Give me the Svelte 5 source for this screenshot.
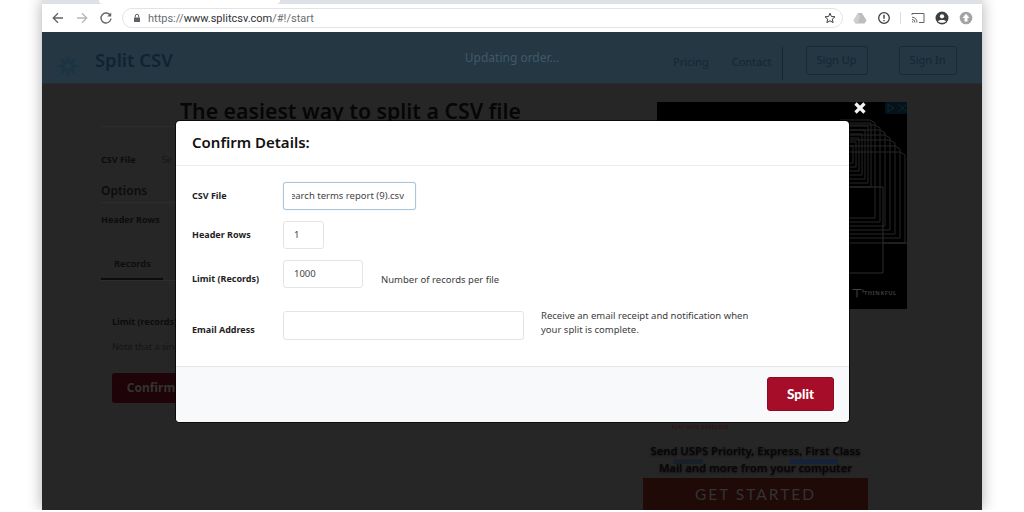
<script>
  const outer = [
    [875, 123, 218], [880, 128, 222], [885, 133, 226], [890, 138, 230], [895, 143, 234], [900, 149, 238], [905, 155, 243]
  ];
  const inner = [
    [853, 146, 163], [856, 142, 167], [859, 138, 171], [862, 134, 175], [865, 130, 179], [868, 126, 183], [871, 123, 187]
  ];
</script>

<div class="window">
  <div class="tabstrip"><span class="tabgap"></span></div>
  <div class="toolbar">
    <div class="navs">
      <svg viewBox="0 0 14 14" width="14" height="14"><path d="M12 7H2.5M7 2.2 2.2 7 7 11.8" fill="none" stroke="#5f6368" stroke-width="1.3"/></svg>
      <svg viewBox="0 0 14 14" width="14" height="14"><path d="M2 7h9.5M7 2.2 11.8 7 7 11.8" fill="none" stroke="#b4b7ba" stroke-width="1.3"/></svg>
      <svg viewBox="0 0 14 14" width="14" height="14"><path d="M11.3 4.4A5 5 0 1 0 12 7.5" fill="none" stroke="#5f6368" stroke-width="1.3"/><path d="M12.2 1.6v4h-4z" fill="#5f6368"/></svg>
    </div>
    <div class="omnibox">
      <svg viewBox="0 0 10 10" width="10" height="10"><path d="M2 4.5h6v4.5H2z" fill="#5f6368"/><path d="M3.3 4.5V3a1.7 1.7 0 0 1 3.4 0v1.5" fill="none" stroke="#5f6368" stroke-width="1"/></svg>
      <span class="url"><span class="dim">https://</span>www.splitcsv.com<span class="dim">/#!/start</span></span>
      <svg class="star" viewBox="0 0 12 12" width="12" height="12"><path d="M6 1.2 7.4 4.5 11 4.8 8.3 7.1 9.1 10.6 6 8.8 2.9 10.6 3.7 7.1 1 4.8 4.6 4.5z" fill="none" stroke="#3c4043" stroke-width="1"/></svg>
    </div>
    <div class="exts">
      <svg viewBox="0 0 14 12" width="14" height="12"><path d="M5 1h4l4.5 7.500-2 3H2.500l-2-3z" fill="#bdbdbd"/><path d="M5 1 7 4.500 4.500 11.500h-2l-2-3z" fill="#cfcfcf"/></svg>
      <svg viewBox="0 0 14 14" width="14" height="14"><circle cx="7" cy="7" r="5.300" fill="none" stroke="#3c4043" stroke-width="1.300"/><path d="M7 3.800v4M7 9v1.300" stroke="#3c4043" stroke-width="1.400"/></svg>
      <span class="sep"></span>
      <svg viewBox="0 0 14 12" width="14" height="12"><path d="M1 3V1.500h12v9H8M1 5.200A5.500 5.500 0 0 1 6 10.500M1 7.500a3 3 0 0 1 3 3M1 9.500a1 1 0 0 1 1 1" fill="none" stroke="#5f6368" stroke-width="1"/></svg>
      <svg viewBox="0 0 14 14" width="14" height="14"><circle cx="7" cy="7" r="6.500" fill="#3c4043"/><circle cx="7" cy="5.300" r="2.100" fill="#fff"/><path d="M2.900 10.300C4 8.500 10 8.500 11.100 10.300 9 12.300 5 12.300 2.900 10.300z" fill="#fff"/></svg>
      <svg viewBox="0 0 14 14" width="14" height="14"><circle cx="7" cy="7" r="6.300" fill="#a3a3a3"/><path d="M7 2.800 10.500 7H8.500v3.500h-3V7H3.500z" fill="#fff"/></svg>
    </div>
  </div>

  <header class="site">
    <div class="brand">
      <svg class="logo" viewBox="0 0 24 24" width="24" height="24"><g fill="#1b3443"><path d="M12 0.500 14 7 12 9.500 10 7z"/><path d="M12 0.500 14 7 12 9.500 10 7z" transform="rotate(45 12 12)"/><path d="M12 0.500 14 7 12 9.500 10 7z" transform="rotate(90 12 12)"/><path d="M12 0.500 14 7 12 9.500 10 7z" transform="rotate(135 12 12)"/><path d="M12 0.500 14 7 12 9.500 10 7z" transform="rotate(180 12 12)"/><path d="M12 0.500 14 7 12 9.500 10 7z" transform="rotate(225 12 12)"/><path d="M12 0.500 14 7 12 9.500 10 7z" transform="rotate(270 12 12)"/><path d="M12 0.500 14 7 12 9.500 10 7z" transform="rotate(315 12 12)"/></g></svg>
      <span class="brandname">Split CSV</span>
    </div>
    <span class="status">Updating order...</span>
    <nav class="links">
      <span>Pricing</span>
      <span>Contact</span>
    </nav>
    <span class="vline"></span>
    <span class="ghost up">Sign Up</span>
    <span class="ghost in">Sign In</span>
  </header>

  <main class="page">
    <div class="left">
      <h1>The easiest way to split a CSV file</h1>
      <div class="rule"></div>
      <div class="row file"><b>CSV File</b><span>Se</span></div>
      <h2>Options</h2>
      <div class="row headers"><b>Header Rows</b></div>
      <div class="tabs"><span class="tab">Records</span></div>
      <div class="panel">
        <b>Limit (records)</b>
        <p>Note that a single</p>
        <span class="confirm">Confirm</span>
      </div>
    </div>
    <aside class="right">
      <div class="ad">
        <svg class="lines" viewBox="657 102 250 208" width="250" height="208">
          {#each outer as [x, y, b]}
            <path d="M840 {y - 3}H{x - 5}L{x} {y}V{b}H840" fill="none" stroke="#262626"/>
          {/each}
          {#each inner as [x, y, b]}
            <path d="M840 {y}H{x}V{b}H840" fill="none" stroke="#262626"/>
          {/each}
          <path d="M800 187H883V273H800M883 243H907" fill="none" stroke="#2c2c2c"/>
          <path d="M852.500 289.500h9M857 289.500v8M863 289.500v3" fill="none" stroke="#444"/>
        </svg>
        <span class="thinkful">THINKFUL</span>
        <span class="adchoice">
          <svg viewBox="0 0 22 12" width="22" height="12"><rect width="22" height="12" fill="#05121a"/><path d="M3 2.500v7l6-3.500zM14 2.500l7 7M21 2.500l-7 7" fill="none" stroke="#0f2733"/></svg>
        </span>
      </div>
      <div class="promo">
        <span class="envelope">FLAT RATE ENVELOPE</span>
        <div class="copy">
          <span class="smudge a"></span>
          <span class="smudge b"></span>
          <p>Send USPS Priority, Express, First Class Mail and more from your computer</p>
        </div>
        <span class="getstarted">GET STARTED</span>
      </div>
    </aside>
  </main>
</div>

<svg class="close" viewBox="0 0 12 12" width="12" height="12"><path d="M1.500 1.500 10.500 10.500M10.500 1.500 1.500 10.500" stroke="#f2f2f2" stroke-width="3.200"/></svg>

<section class="modal">
  <div class="m-head">Confirm Details:</div>
  <div class="m-body">
    <div class="f one">
      <label for="csv">CSV File</label>
      <div id="csv" class="input focus"><div class="clip"><span>Search terms report (9).csv</span></div></div>
    </div>
    <div class="f two">
      <label for="hr">Header Rows</label>
      <input id="hr" class="input w40" value="1" readonly />
    </div>
    <div class="f three">
      <label for="lim">Limit (Records)</label>
      <input id="lim" class="input w80" value="1000" readonly />
      <span class="hint">Number of records per file</span>
    </div>
    <div class="f four">
      <label for="em">Email Address</label>
      <input id="em" class="input w240" readonly />
      <span class="hint wide">Receive an email receipt and notification when your split is complete.</span>
    </div>
  </div>
  <div class="m-foot"><button class="split">Split</button></div>
</section>

<style>
  :global(body) {
    margin: 0;
    background: #fff;
    overflow: hidden;
  }
  .window {
    width: 940px;
    height: 510px;
    margin-left: 42px;
    display: flex;
    flex-direction: column;
    overflow: hidden;
    box-shadow: 0 0 14px rgba(0, 0, 0, 0.32);
    font-family: "Noto Sans", sans-serif;
    background: #262626;
  }
  .tabstrip {
    height: 4px;
    background: #dee1e6;
    padding-left: 57px;
    flex: none;
  }
  .tabgap {
    display: block;
    width: 181px;
    height: 4px;
    background: #fff;
    border-radius: 0 0 6px 6px;
  }
  .toolbar {
    height: 28px;
    flex: none;
    background: #fff;
    display: flex;
    align-items: center;
    box-sizing: border-box;
    padding-left: 9px;
  }
  .navs {
    display: flex;
    gap: 10px;
    width: 71px;
    flex: none;
    align-items: center;
  }
  .omnibox {
    width: 721px;
    height: 20px;
    box-sizing: border-box;
    border: 1px solid #e2e3e5;
    border-radius: 10px;
    display: flex;
    align-items: center;
    padding-left: 9px;
    gap: 6px;
    flex: none;
  }
  .url {
    font: 11px Roboto, sans-serif;
    color: #303134;
  }
  .dim { color: #6a6d71; }
  .star { margin-left: auto; margin-right: 6px; }
  .exts {
    display: flex;
    align-items: center;
    margin-left: 10px;
    gap: 10px;
  }
  .sep {
    width: 1px;
    height: 12px;
    background: #dadce0;
    margin: 0 0 0 -1px;
  }
  .site {
    height: 51px;
    flex: none;
    background: #243743;
    display: flex;
    align-items: center;
    position: relative;
    color: #162836;
  }
  .brand {
    display: flex;
    align-items: center;
    margin-left: 14px;
    gap: 15px;
    width: 417px;
    flex: none;
  }
  .logo { position: relative; top: 8px; }
  .brandname {
    font-size: 18.400px;
    font-weight: 600;
    color: #0f2433;
    position: relative;
    top: 2px;
  }
  .status {
    width: 140px;
    flex: none;
    text-align: center;
    font-size: 12px;
    color: #40596a;
    margin-right: 25px;
    margin-left: -31px;
    margin-top: -1px;
  }
  .links {
    display: flex;
    gap: 23px;
    font-size: 11px;
    color: #142635;
    margin-left: 66px;
    margin-top: 8px;
  }
  .vline {
    width: 1px;
    height: 33px;
    background: #15262f;
    margin-left: 10px;
    margin-top: 12px;
  }
  .ghost {
    box-sizing: border-box;
    height: 29px;
    border: 1px solid #172a38;
    border-radius: 3px;
    font-size: 11px;
    color: #142635;
    display: flex;
    align-items: center;
    justify-content: center;
    padding-bottom: 3px;
    margin-top: 6px;
  }
  .up { width: 62px; margin-left: 23px; }
  .in { width: 58px; margin-left: 31px; }
  .page {
    flex: 1;
    display: flex;
    min-height: 0;
    background: #262626;
    border-top: 1px solid #2c2c2c;
  }
  .left {
    width: 615px;
    flex: none;
    box-sizing: border-box;
    padding-left: 59px;
    color: #0a0a0a;
  }
  h1 {
    margin: 14px 0 0 79px;
    font-size: 21.250px;
    line-height: 26px;
    font-weight: 600;
    color: #060606;
    white-space: nowrap;
  }
  .rule {
    height: 1px;
    background: #2d2d2d;
    width: 400px;
    margin-top: 2px;
  }
  .row {
    display: flex;
    font-size: 9px;
    color: #0c0c0c;
  }
  .row b { font-weight: 700; }
  .row span { margin-left: 26px; color: #161616; }
  .file { margin-top: 26px; line-height: 14px; }
  h2 {
    margin: 16px 0 0;
    font-size: 12px;
    line-height: 16px;
    font-weight: 600;
    color: #0c0c0c;
    padding-bottom: 3px;
    border-bottom: 1px solid #2d2d2d;
    width: 400px;
  }
  .headers { margin-top: 10px; line-height: 14px; }
  .tabs {
    margin-top: 30px;
    border-bottom: 1px solid #2d2d2d;
    width: 400px;
    height: 23px;
  }
  .tab {
    display: block;
    width: 62px;
    box-sizing: border-box;
    height: 23px;
    border-bottom: 2px solid #0c0c0c;
    padding-left: 13px;
    font-size: 9.500px;
    font-weight: 600;
    line-height: 14px;
    color: #0c0c0c;
  }
  .panel {
    padding: 34px 0 0 11px;
    font-size: 9px;
    line-height: 14px;
    color: #0c0c0c;
  }
  .panel b { display: block; }
  .panel p { margin: 11px 0 0; color: #141414; }
  .confirm {
    display: flex;
    align-items: center;
    justify-content: center;
    width: 78px;
    height: 30px;
    margin-top: 19px;
    background: #1e0308;
    border-radius: 3px;
    font-size: 12px;
    font-weight: 700;
    color: #333;
  }
  .right {
    flex: 1;
    display: flex;
    flex-direction: column;
    min-width: 0;
  }
  .ad {
    width: 250px;
    height: 208px;
    background: #000;
    margin-top: 18px;
    position: relative;
    overflow: hidden;
  }
  .lines { display: block; }
  .thinkful {
    position: absolute;
    left: 207px;
    top: 187px;
    font-size: 5.500px;
    font-weight: 700;
    letter-spacing: 0.6px;
    color: #3c3c3c;
  }
  .adchoice {
    position: absolute;
    right: 0;
    top: 0;
    height: 12px;
    line-height: 0;
  }
  .promo {
    width: 225px;
    margin: 115px 0 0 -14px;
    text-align: center;
    color: #070707;
  }
  .envelope {
    display: block;
    font-family: "Liberation Sans", sans-serif;
    font-size: 4.500px;
    font-weight: 700;
    letter-spacing: 0.4px;
    line-height: 8px;
    color: #33101a;
    text-align: left;
    padding-left: 29px;
  }
  .copy { position: relative; }
  .smudge {
    position: absolute;
    top: 27px;
    height: 5px;
  }
  .smudge.a { left: 30px; width: 30px; background: #1a2028; }
  .smudge.b { left: 147px; width: 48px; background: #14233a; }
  .promo p {
    position: relative;
    margin: 0;
    padding-top: 10px;
    font-size: 11.250px;
    line-height: 17px;
    font-weight: 600;
    text-shadow: 0 1px 2px rgba(0, 0, 0, 0.6);
  }
  .getstarted {
    display: block;
    height: 32px;
    margin-top: 2px;
    background: #1f0a08;
    font-family: Lato, sans-serif;
    font-size: 15.500px;
    line-height: 32px;
    letter-spacing: 2px;
    color: #333;
  }
  .close {
    position: absolute;
    left: 854px;
    top: 102px;
  }
  .modal {
    position: absolute;
    left: 176px;
    top: 121px;
    width: 673px;
    height: 301px;
    background: #fff;
    border-radius: 4px;
    overflow: hidden;
    display: flex;
    flex-direction: column;
    font-family: "Noto Sans", sans-serif;
    color: #1c1c1c;
    box-shadow: 0 0 0 1px rgba(0, 0, 0, 0.7);
  }
  .m-head {
    height: 45px;
    flex: none;
    box-sizing: border-box;
    border-bottom: 1px solid #ececec;
    padding-left: 16px;
    font-size: 15px;
    font-weight: 600;
    line-height: 42px;
    color: #111;
  }
  .m-body {
    flex: 1;
    display: flex;
    flex-direction: column;
    padding: 16px 0 0 16px;
  }
  .f {
    display: flex;
    align-items: center;
  }
  .two { margin-top: 11px; }
  .three { margin-top: 11px; }
  .four { margin-top: 23px; }
  label {
    width: 91px;
    flex: none;
    font-size: 9px;
    font-weight: 700;
    color: #1e1e1e;
    position: relative;
  }
  .one label, .two label { top: -1px; }
  .three label, .four label { top: 4px; }
  .input {
    box-sizing: border-box;
    height: 29px;
    border: 1px solid #e2e4e6;
    border-radius: 3px;
    background: #fff;
    font: 9.500px "Noto Sans", sans-serif;
    color: #444;
    padding: 0 9px 2px 10px;
    outline: none;
    flex: none;
  }
  .focus {
    width: 133px;
    height: 28px;
    border-color: #a9c6dd;
    box-shadow: 0 0 1px #a9c6dd;
    display: flex;
    align-items: center;
    padding: 0 11px 0 8px;
  }
  .clip {
    flex: 1;
    min-width: 0;
    display: flex;
    justify-content: flex-end;
    overflow: hidden;
    white-space: nowrap;
    line-height: 14px;
  }
  .clip span { flex: none; }
  .w40 { width: 41px; height: 28px; }
  .w80 { width: 80px; height: 28px; }
  .w240 { width: 241px; }
  .hint {
    font-size: 9.500px;
    color: #3c3c3c;
    margin-left: 18px;
    position: relative;
    top: 5px;
  }
  .wide {
    width: 225px;
    line-height: 14px;
    top: -3px;
    margin-left: 17px;
  }
  .m-foot {
    height: 56px;
    flex: none;
    box-sizing: border-box;
    background: #f8f9fb;
    border-top: 1px solid #e4e6e9;
    display: flex;
    align-items: center;
    justify-content: flex-end;
    padding: 0 15px 2px 0;
  }
  .split {
    width: 67px;
    height: 34px;
    border: 1px solid #8f0a22;
    border-radius: 3px;
    background: #a50d28;
    color: #fff;
    font-family: Lato, sans-serif;
    font-size: 13.500px;
    font-weight: 900;
    padding: 0;
  }
</style>
